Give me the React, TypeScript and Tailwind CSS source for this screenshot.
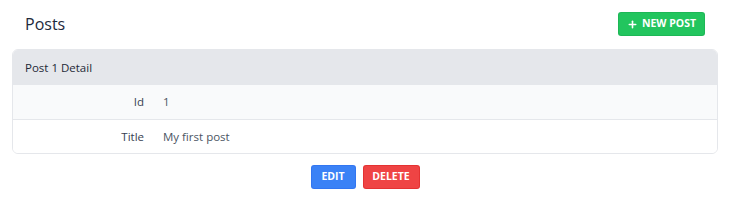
import { Plus } from "lucide-react";

export default function App() {
  const rows = [
    { label: "Id", value: "1" },
    { label: "Title", value: "My first post" },
  ];

  return (
    <div
      className="w-[730px] h-[204px] bg-white px-3 pt-3"
      style={{ fontFamily: "'Open Sans', 'Noto Sans', sans-serif" }}
    >
      {/* Title bar */}
      <div className="flex items-center justify-between pl-[13px] pr-[13px] h-6">
        <h1 className="text-[16px] text-[#1e293b]">Posts</h1>
        <button className="flex items-center gap-1 h-6 w-[87px] justify-center rounded-[3px] border border-[#16a34a]/40 bg-[#22c55e] text-[10.5px] font-bold text-white">
          <Plus size={11} strokeWidth={3.5} />
          NEW POST
        </button>
      </div>

      {/* Detail card */}
      <div className="mt-[13px] rounded-md border border-[#e5e7eb] overflow-hidden">
        <div className="h-[35px] bg-[#e5e7eb] flex items-center px-3 text-[11.5px] font-medium text-[#1f2937]">
          Post 1 Detail
        </div>
        {rows.map((row, i) => (
          <div
            key={row.label}
            className={`flex items-center h-[34px] text-[11.5px] ${
              i === 0 ? "bg-[#f9fafb]" : "bg-white border-t border-[#e5e7eb]"
            }`}
          >
            <div className="w-[131px] text-right font-medium text-[#374151]">
              {row.label}
            </div>
            <div className="pl-[19px] text-[#4b5563]">{row.value}</div>
          </div>
        ))}
      </div>

      {/* Actions */}
      <div className="flex justify-center gap-[7px] mt-[11px]">
        <button className="h-6 w-[45px] rounded-[3px] border border-[#2563eb]/40 bg-[#3b82f6] text-[10.5px] font-bold text-white">
          EDIT
        </button>
        <button className="h-6 w-[57px] rounded-[3px] border border-[#dc2626]/60 bg-[#ef4444] text-[10.5px] font-bold text-white">
          DELETE
        </button>
      </div>
    </div>
  );
}
